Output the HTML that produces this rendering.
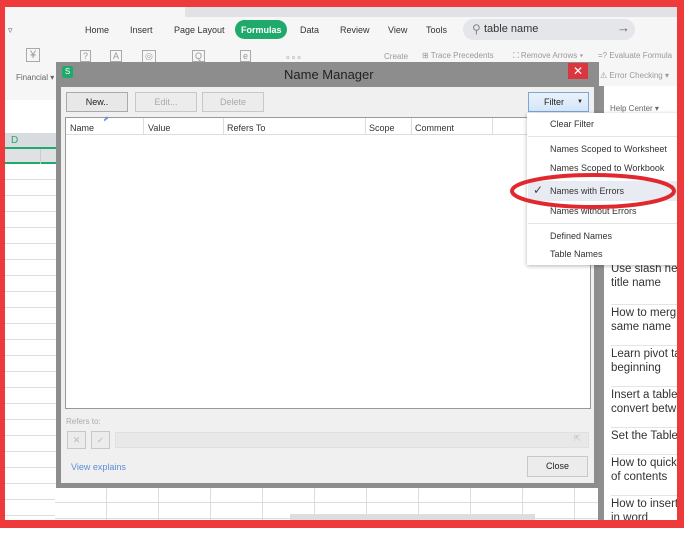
<!DOCTYPE html><html><head><style>
*{margin:0;padding:0;box-sizing:border-box}
body{width:684px;height:528px;position:relative;overflow:hidden;background:#fff;font-family:"Liberation Sans",sans-serif;font-size:9px;color:#333}
.a{position:absolute}
.t{position:absolute;white-space:nowrap}
.btn{position:absolute;border:1px solid #c8c8c8;background:#ececec;text-align:center;line-height:18px;font-size:9px;white-space:nowrap}
</style></head><body>
<div class="a" style="left:0;top:0;width:684px;height:100px;background:#f6f6f6"></div>
<div class="a" style="left:185px;top:7px;width:495px;height:10px;background:#e2e2e6"></div>
<div class="t" style="left:8px;top:25px;color:#666">▿</div>
<div class="t" style="left:85px;top:25px">Home</div>
<div class="t" style="left:130px;top:25px">Insert</div>
<div class="t" style="left:174px;top:25px">Page Layout</div>
<div class="a" style="left:235px;top:20px;width:52px;height:19px;border-radius:10px;background:#1faa6c"></div>
<div class="t" style="left:241px;top:25px;color:#fff;font-weight:bold">Formulas</div>
<div class="t" style="left:300px;top:25px">Data</div>
<div class="t" style="left:340px;top:25px">Review</div>
<div class="t" style="left:388px;top:25px">View</div>
<div class="t" style="left:426px;top:25px">Tools</div>
<div class="a" style="left:463px;top:19px;width:172px;height:21px;border-radius:11px;background:#e4e6ea"></div>
<div class="t" style="left:472px;top:22px;font-size:12px;color:#888">⚲</div>
<div class="t" style="left:484px;top:23px;font-size:11px;color:#333">table name</div>
<div class="t" style="left:617px;top:20px;font-size:13px;color:#666">→</div>
<div class="t" style="left:26px;top:48px;font-size:11px;color:#999;border:1px solid #aaa;padding:0 3px">¥</div>
<div class="t" style="left:16px;top:73px;color:#666;font-size:8px">Financial ▾</div>
<div class="t" style="left:80px;top:50px;color:#999;border:1px solid #aaa;padding:0 2px;font-size:9px">?</div>
<div class="t" style="left:110px;top:50px;color:#999;border:1px solid #aaa;padding:0 2px;font-size:9px">A</div>
<div class="t" style="left:142px;top:50px;color:#999;border:1px solid #aaa;padding:0 2px;font-size:9px">◎</div>
<div class="t" style="left:192px;top:50px;color:#999;border:1px solid #aaa;padding:0 2px;font-size:9px">Q</div>
<div class="t" style="left:240px;top:50px;color:#999;border:1px solid #aaa;padding:0 2px;font-size:9px">e</div>
<div class="t" style="left:285px;top:52px;color:#aaa">∘∘∘</div>
<div class="t" style="left:384px;top:52px;color:#999;font-size:8px">Create</div>
<div class="t" style="left:422px;top:51px;color:#999;font-size:8px">⊞ Trace Precedents</div>
<div class="t" style="left:513px;top:51px;color:#999;font-size:8px">⛶ Remove Arrows ▾</div>
<div class="t" style="left:598px;top:51px;color:#999;font-size:8px">=? Evaluate Formula</div>
<div class="t" style="left:600px;top:71px;color:#999;font-size:8px">⚠ Error Checking ▾</div>
<div class="a" style="left:0;top:100px;width:600px;height:428px;background:#fff"></div>
<div class="a" style="left:0;top:133px;width:60px;height:15px;background:#d8dbe0"></div>
<div class="t" style="left:11px;top:135px;color:#1faa6c;font-size:10px">D</div>
<div class="a" style="left:0;top:147px;width:60px;height:2px;background:#1faa6c"></div>
<div class="a" style="left:0;top:162px;width:60px;height:2px;background:#1faa6c"></div>
<div class="a" style="left:0;top:149px;width:60px;height:13px;background:#dfe1e4"></div>
<div class="a" style="left:40px;top:149px;width:1px;height:370px;background:#ccc"></div>
<div class="a" style="left:0;top:164px;width:60px;height:356px;background:repeating-linear-gradient(#fff 0 15px,#ddd 15px 16px)"></div>
<div class="a" style="left:55px;top:487px;width:543px;height:33px;background:repeating-linear-gradient(#fff 0 15px,#ddd 15px 16px)"></div>
<div class="a" style="left:55px;top:487px;width:543px;height:33px;background:repeating-linear-gradient(90deg,transparent 0 51px,#ddd 51px 52px)"></div>
<div class="a" style="left:290px;top:514px;width:245px;height:6px;background:#ddd"></div>
<div class="a" style="left:598px;top:86px;width:6px;height:434px;background:#8f8f8f"></div>
<div class="a" style="left:604px;top:86px;width:76px;height:434px;background:#fff"></div>
<div class="t" style="left:610px;top:104px;color:#666;font-size:8px">Help Center ▾</div>
<div class="a" style="left:604px;top:120px;width:76px;height:1px;background:#ddd"></div>
<div class="a" style="left:611px;top:263px;font-size:11.5px;line-height:13.5px;color:#333">
<div style="height:41px">Use slash hea<br>title name</div>
<div style="height:41px;border-top:1px solid #e4e4e4;padding-top:2px">How to merg<br>same name</div>
<div style="height:41px;border-top:1px solid #e4e4e4;padding-top:2px">Learn pivot ta<br>beginning</div>
<div style="height:41px;border-top:1px solid #e4e4e4;padding-top:2px">Insert a table<br>convert betw</div>
<div style="height:27px;border-top:1px solid #e4e4e4;padding-top:2px">Set the Table</div>
<div style="height:41px;border-top:1px solid #e4e4e4;padding-top:2px">How to quick<br>of contents</div>
<div style="height:41px;border-top:1px solid #e4e4e4;padding-top:2px">How to insert<br>in word</div>
</div>
<div class="a" style="left:56px;top:62px;width:543px;height:426px;background:#8d8d8d"></div>
<div class="a" style="left:61px;top:87px;width:533px;height:396px;background:#f0f0f0"></div>
<div class="a" style="left:62px;top:66px;width:11px;height:12px;background:#1faa6c;border-radius:2px;color:#fff;font-size:8px;text-align:center;line-height:12px">S</div>
<div class="t" style="left:284px;top:67px;font-size:13px;color:#222">Name Manager</div>
<div class="a" style="left:568px;top:63px;width:20px;height:16px;background:#d9363e;color:#fff;text-align:center;font-size:12px;line-height:16px">✕</div>
<div class="btn" style="left:66px;top:92px;width:62px;height:20px;color:#222;background:#e8e8e8;border-color:#aaa">New..</div>
<div class="btn" style="left:135px;top:92px;width:62px;height:20px;color:#aaa">Edit...</div>
<div class="btn" style="left:202px;top:92px;width:62px;height:20px;color:#aaa">Delete</div>
<div class="btn" style="left:528px;top:92px;width:61px;height:20px;background:linear-gradient(#eaf2fb,#d4e6f8);border-color:#7aa7d6;color:#222;text-align:left;padding-left:15px">Filter</div>
<div class="t" style="left:577px;top:99px;font-size:6px;color:#222">▼</div>
<div class="a" style="left:65px;top:117px;width:526px;height:292px;background:#fff;border:1px solid #999"></div>
<div class="a" style="left:66px;top:118px;width:524px;height:17px;border-bottom:1px solid #ddd"></div>
<div class="t" style="left:70px;top:123px">Name</div>
<div class="t" style="left:103px;top:115px;font-size:7px;color:#5b8fd6">⬈</div>
<div class="a" style="left:143px;top:118px;width:1px;height:17px;background:#ddd"></div>
<div class="t" style="left:148px;top:123px">Value</div>
<div class="a" style="left:223px;top:118px;width:1px;height:17px;background:#ddd"></div>
<div class="t" style="left:227px;top:123px">Refers To</div>
<div class="a" style="left:365px;top:118px;width:1px;height:17px;background:#ddd"></div>
<div class="t" style="left:369px;top:123px">Scope</div>
<div class="a" style="left:411px;top:118px;width:1px;height:17px;background:#ddd"></div>
<div class="t" style="left:415px;top:123px">Comment</div>
<div class="a" style="left:492px;top:118px;width:1px;height:17px;background:#ddd"></div>
<div class="t" style="left:66px;top:417px;color:#aaa;font-size:8px">Refers to:</div>
<div class="btn" style="left:67px;top:431px;width:19px;height:18px;color:#bbb;line-height:16px">✕</div>
<div class="btn" style="left:91px;top:431px;width:19px;height:18px;color:#bbb;line-height:16px">✓</div>
<div class="a" style="left:115px;top:432px;width:474px;height:16px;background:#e8e8e8;border:1px solid #e0e0e0"></div>
<div class="t" style="left:574px;top:434px;color:#bbb;font-size:8px">⇱</div>
<div class="t" style="left:71px;top:462px;color:#5b8fd6">View explains</div>
<div class="btn" style="left:527px;top:456px;width:61px;height:21px;color:#222;line-height:19px">Close</div>
<div class="a" style="left:527px;top:113px;width:157px;height:152px;background:#fff;box-shadow:0 1px 4px rgba(0,0,0,.3);font-size:9px;color:#222"></div>
<div class="t" style="left:550px;top:119px">Clear Filter</div>
<div class="a" style="left:528px;top:136px;width:150px;height:1px;background:#e4e4e4"></div>
<div class="t" style="left:550px;top:144px">Names Scoped to Worksheet</div>
<div class="t" style="left:550px;top:163px">Names Scoped to Workbook</div>
<div class="a" style="left:528px;top:181px;width:150px;height:20px;background:#e8ecf2"></div>
<div class="t" style="left:533px;top:183px;font-size:12px;color:#444">✓</div>
<div class="t" style="left:550px;top:186px">Names with Errors</div>
<div class="t" style="left:550px;top:206px">Names without Errors</div>
<div class="a" style="left:528px;top:223px;width:150px;height:1px;background:#e4e4e4"></div>
<div class="t" style="left:550px;top:231px">Defined Names</div>
<div class="t" style="left:550px;top:249px">Table Names</div>
<svg class="a" style="left:0;top:0" width="684" height="528"><ellipse cx="593" cy="191" rx="81" ry="16" fill="none" stroke="#e0282e" stroke-width="4"/></svg>
<div class="a" style="left:0;top:0;width:684px;height:528px;border:solid #ee3a3a;border-width:7px 7px 8px 5px"></div>
</body></html>
